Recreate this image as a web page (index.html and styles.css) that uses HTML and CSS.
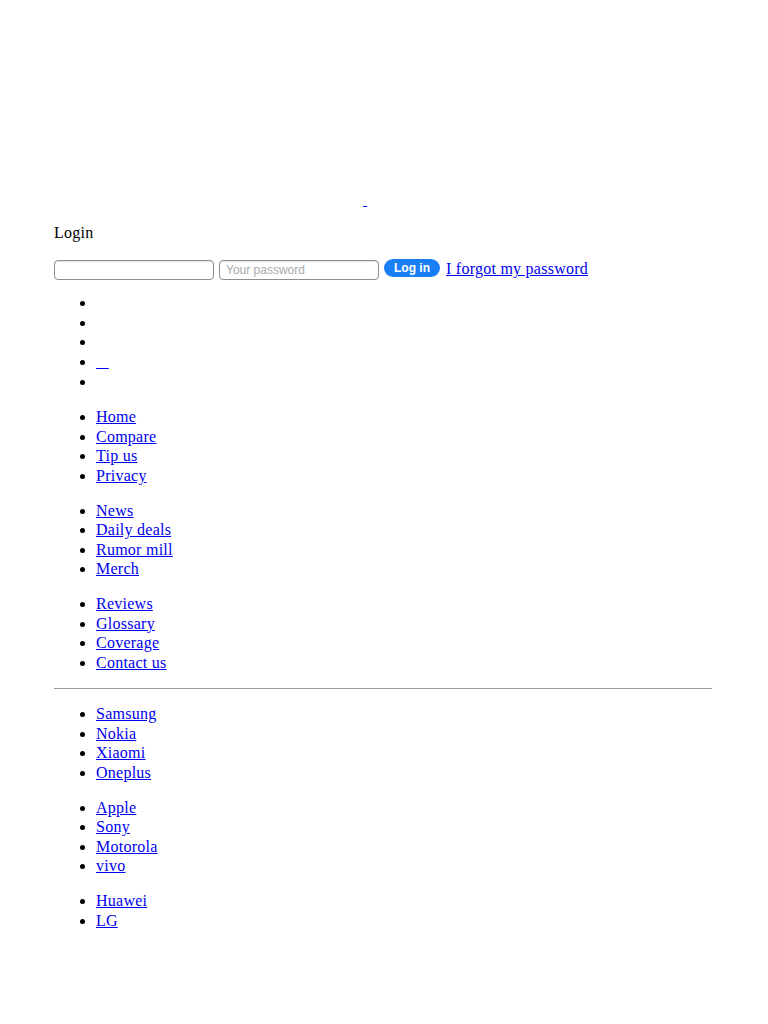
FILE: index.html
```html
<!DOCTYPE html>
<html lang="en">
<head>
<meta charset="utf-8">
<title>Login</title>
<link rel="stylesheet" href="styles.css">
</head>
<body>
<div class="page">
  <div class="top-space"></div>
  <div class="logo-line"><a href="#" class="logo-link">&nbsp;</a></div>
  <p class="login-title">Login</p>
  <form class="login-row">
    <input class="field" type="text">
    <input class="field" type="password" placeholder="Your password">
    <button class="login-btn" type="button">Log in</button>
    <a href="#" class="forgot">I forgot my password</a>
  </form>
  <ul class="list list-first">
    <li></li>
    <li></li>
    <li></li>
    <li><a href="#">&nbsp;&nbsp;&nbsp;</a></li>
    <li></li>
  </ul>
  <ul class="list">
    <li><a href="#">Home</a></li>
    <li><a href="#">Compare</a></li>
    <li><a href="#">Tip us</a></li>
    <li><a href="#">Privacy</a></li>
  </ul>
  <ul class="list">
    <li><a href="#">News</a></li>
    <li><a href="#">Daily deals</a></li>
    <li><a href="#">Rumor mill</a></li>
    <li><a href="#">Merch</a></li>
  </ul>
  <ul class="list">
    <li><a href="#">Reviews</a></li>
    <li><a href="#">Glossary</a></li>
    <li><a href="#">Coverage</a></li>
    <li><a href="#">Contact us</a></li>
  </ul>
  <hr class="divider">
  <ul class="list">
    <li><a href="#">Samsung</a></li>
    <li><a href="#">Nokia</a></li>
    <li><a href="#">Xiaomi</a></li>
    <li><a href="#">Oneplus</a></li>
  </ul>
  <ul class="list">
    <li><a href="#">Apple</a></li>
    <li><a href="#">Sony</a></li>
    <li><a href="#">Motorola</a></li>
    <li><a href="#">vivo</a></li>
  </ul>
  <ul class="list">
    <li><a href="#">Huawei</a></li>
    <li><a href="#">LG</a></li>
  </ul>
</div>
</body>
</html>
```

FILE: styles.css
```css
html, body {
  margin: 0;
  padding: 0;
  background: #ffffff;
}

body {
  font-family: "Liberation Serif", "Times New Roman", serif;
  font-size: 16px;
  line-height: 19.6px;
  letter-spacing: 0.25px;
  color: #000000;
}

a {
  color: #0000ee;
}

.page {
  width: 658px;
  margin: 0 0 0 54px;
}

.top-space {
  height: 190px;
}

.logo-line {
  height: 19.6px;
  padding-left: 309px;
}

.login-title {
  margin: 13px 0 0 0;
}

.login-row {
  display: flex;
  align-items: flex-start;
  height: 18px;
  margin: 17px 0 0 0;
}

.field {
  box-sizing: border-box;
  width: 160px;
  height: 20px;
  margin: 1px 5px 0 0;
  padding: 0 6px;
  border: 1px solid #8e8e8e;
  border-radius: 4px;
  background: #ffffff;
  font-family: "Liberation Sans", Arial, sans-serif;
  font-size: 12px;
  letter-spacing: 0;
  color: #000;
  box-shadow: inset 0 1px 1px rgba(0,0,0,0.12);
}

.field::placeholder {
  color: #a9a9a9;
}

.login-btn {
  box-sizing: border-box;
  width: 56px;
  height: 18px;
  margin: 0 6px 0 0;
  padding: 0;
  border: none;
  border-radius: 9px;
  background: #1a7ff5;
  color: #ffffff;
  font-family: "Liberation Sans", Arial, sans-serif;
  font-weight: bold;
  font-size: 12px;
  letter-spacing: 0;
  line-height: 18px;
}

.forgot {
  line-height: 19.6px;
}

.list {
  margin: 15px 0;
  padding-left: 42px;
}

.list-first {
  margin: 16px 0;
}

.divider {
  margin: 16px 0 15px 0;
  height: 0;
  border: none;
  border-top: 1px solid #9a9a9a;
}
```
